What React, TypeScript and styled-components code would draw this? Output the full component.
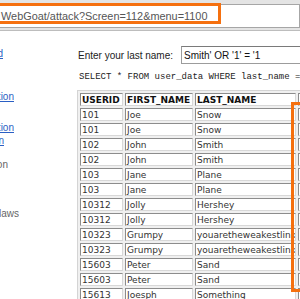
import React from "react";
import styled, { createGlobalStyle } from "styled-components";

const Global = createGlobalStyle`
  html, body { margin: 0; padding: 0; overflow: hidden; background: #fff; }
  body { font-family: "Liberation Sans", Arial, sans-serif; width: 300px; height: 299px; }
`;

const ORANGE = "#f5700f";

const Toolbar = styled.div`
  position: relative;
  height: 31px;
  background: #e4e4e4;
  border-bottom: 1px solid #bdbdbd;
  padding-top: 4px;
  box-sizing: border-box;
`;

const AddressField = styled.div`
  height: 24px;
  margin-left: -4px;
  background: #fff;
  border: 1px solid #a6a6a6;
  box-sizing: border-box;
  display: flex;
  align-items: center;
  padding-left: 4px;
  padding-top: 0px;
  font-size: 10.9px;
  color: #555;
  white-space: nowrap;
  overflow: hidden;
`;

const Highlight = styled.div<{ $l: number; $t: number; $w: number; $h: number }>`
  position: absolute;
  left: ${(p) => p.$l}px;
  top: ${(p) => p.$t}px;
  width: ${(p) => p.$w}px;
  height: ${(p) => p.$h}px;
  border: 3px solid ${ORANGE};
  box-sizing: border-box;
  pointer-events: none;
`;

const Main = styled.div`
  display: grid;
  grid-template-columns: 77px 1fr;
`;

const Nav = styled.div`
  display: flex;
  flex-direction: column;
`;

const NavItem = styled.div<{ $end: number; $mt: number; $link?: boolean }>`
  width: ${(p) => p.$end}px;
  margin-top: ${(p) => p.$mt}px;
  display: flex;
  justify-content: flex-end;
  overflow: hidden;
  white-space: nowrap;
  font-size: 10px;
  line-height: 13px;
  color: ${(p) => (p.$link ? "#2a5fc4" : "#666")};
  text-decoration: ${(p) => (p.$link ? "underline" : "none")};
`;

const Content = styled.div`
  display: flex;
  flex-direction: column;
  min-width: 0;
`;

const FormRow = styled.div`
  display: flex;
  align-items: center;
  gap: 8px;
  margin-top: 15px;
  margin-left: 1px;
  font-size: 10px;
  color: #222;
  white-space: nowrap;
`;

const TextInput = styled.div`
  height: 18px;
  width: 200px;
  flex: none;
  box-sizing: border-box;
  border: 1px solid #9c9c9c;
  border-top-color: #7a7a7a;
  background: #fff;
  display: flex;
  align-items: center;
  padding-left: 2px;
  font-size: 10px;
  color: #111;
`;

const Sql = styled.div`
  margin-top: 8px;
  margin-left: 2px;
  font-family: "Liberation Mono", "Courier New", monospace;
  font-size: 9px;
  line-height: 11px;
  color: #222;
  white-space: pre;
`;

const TableWrap = styled.div`
  position: relative;
  margin-top: 7px;
`;

const Table = styled.table`
  border-collapse: separate;
  border-spacing: 2px;
  table-layout: fixed;
  width: 420px;
  background: #f0f0f0;
  border: 1px solid;
  border-color: #d4d4d4 #8a8a8a #8a8a8a #d4d4d4;
  font-family: "DejaVu Sans", Verdana, sans-serif;
  font-size: 9px;
`;

const Cell = styled.td<{ $head?: boolean }>`
  height: 13px;
  box-sizing: border-box;
  padding: 1px 0 0 1px;
  line-height: 10px;
  background: #fff;
  border: 1px solid;
  border-color: #8c8c8c #d8d8d8 #d8d8d8 #8c8c8c;
  white-space: nowrap;
  overflow: hidden;
  vertical-align: top;
  font-weight: ${(p) => (p.$head ? "bold" : "normal")};
  color: ${(p) => (p.$head ? "#111" : "#333")};
`;

const cols = [43, 68, 101, 100, 100];
const heads = ["USERID", "FIRST_NAME", "LAST_NAME", "CC_NUMBER", "CC_TYPE"];
const rows: string[][] = [
  ["101", "Joe", "Snow", "987654321", "VISA"],
  ["101", "Joe", "Snow", "2234200065411", "MC"],
  ["102", "John", "Smith", "2435600002222", "MC"],
  ["102", "John", "Smith", "4352209902222", "AMEX"],
  ["103", "Jane", "Plane", "123456789", "MC"],
  ["103", "Jane", "Plane", "333498703333", "AMEX"],
  ["10312", "Jolly", "Hershey", "176896789", "MC"],
  ["10312", "Jolly", "Hershey", "333300003333", "AMEX"],
  ["10323", "Grumpy", "youaretheweakestlink", "673834489", "MC"],
  ["10323", "Grumpy", "youaretheweakestlink", "33413003333", "AMEX"],
  ["15603", "Peter", "Sand", "123609789", "MC"],
  ["15603", "Peter", "Sand", "338893453333", "AMEX"],
  ["15613", "Joesph", "Something", "33843453533", "AMEX"],
];

const navItems = [
  { text: "Lesson Completed", end: 3, mt: 16, link: true },
  { text: "Blind Numeric SQL Injection", end: 14, mt: 30, link: true },
  { text: "Blind String SQL Injection", end: 14, mt: 18, link: true },
  { text: "LAB: SQL Injection", end: 4, mt: 0, link: true },
  { text: "Insecure Communication", end: 8, mt: 11, link: false },
  { text: "Injection Flaws", end: 19, mt: 36, link: false },
];

export default function App() {
  return (
    <>
      <Global />
      <Toolbar>
        <AddressField>WebGoat/attack?Screen=112&amp;menu=1100</AddressField>
        <Highlight $l={-3} $t={3} $w={224} $h={21} />
      </Toolbar>
      <Main>
        <Nav>
          {navItems.map((n, i) => (
            <NavItem key={i} $end={n.end} $mt={n.mt} $link={n.link}>
              <span>{n.text}</span>
            </NavItem>
          ))}
        </Nav>
        <Content>
          <FormRow>
            <span>Enter your last name:</span>
            <TextInput>Smith' OR '1' = '1</TextInput>
          </FormRow>
          <Sql>SELECT * FROM user_data WHERE last_name = 'Smith' OR '1' = '1'</Sql>
          <TableWrap>
            <Table>
              <colgroup>
                {cols.map((w, i) => (
                  <col key={i} style={{ width: w }} />
                ))}
              </colgroup>
              <tbody>
                <tr>
                  {heads.map((h) => (
                    <Cell as="th" key={h} $head style={{ textAlign: "left" }}>
                      {h}
                    </Cell>
                  ))}
                </tr>
                {rows.map((r, i) => (
                  <tr key={i}>
                    {r.map((c, j) => (
                      <Cell key={j}>{c}</Cell>
                    ))}
                  </tr>
                ))}
              </tbody>
            </Table>
            <Highlight $l={214} $t={12} $w={120} $h={190} />
          </TableWrap>
        </Content>
      </Main>
    </>
  );
}
